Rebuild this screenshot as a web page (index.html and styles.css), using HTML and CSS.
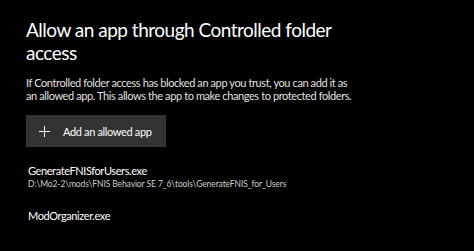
FILE: index.html
```html
<!DOCTYPE html>
<html lang="en">

<head>
    <meta charset="UTF-8">
    <title>Allow an app through Controlled folder access</title>
    <link rel="stylesheet" href="styles.css">
</head>

<body>
    <div class="page">
        <h1 class="title">Allow an app through Controlled folder access</h1>
        <p class="desc">If Controlled folder access has blocked an app you trust, you can add it as an allowed app. This allows the app to make changes to protected folders.</p>

        <button class="add-btn">
            <svg class="plus" width="11" height="11" viewBox="0 0 11 11">
                <path d="M5.5 0 V11 M0 5.5 H11" stroke="#fff" stroke-width="1" fill="none" />
            </svg>
            <span>Add an allowed app</span>
        </button>

        <div class="app-list">
            <div class="app">
                <div class="app-name">GenerateFNISforUsers.exe</div>
                <div class="app-path">D:\Mo2-2\mods\FNIS Behavior SE 7_6\tools\GenerateFNIS_for_Users</div>
            </div>
            <div class="app">
                <div class="app-name">ModOrganizer.exe</div>
            </div>
        </div>
    </div>
</body>

</html>
```

FILE: styles.css
```css
* {
    box-sizing: border-box;
}

body {
    margin: 0;
    background-color: #000;
    color: #fff;
    font-family: Lato, "Open Sans", sans-serif;
}

.page {
    padding: 18px 26px 0 26px;
}

.title {
    margin: 0;
    width: 320px;
    font-size: 19px;
    font-weight: 400;
    line-height: 23px;
    letter-spacing: -0.5px;
}

.desc {
    margin: 12px 0 0 0;
    width: 330px;
    font-size: 11px;
    line-height: 13px;
    letter-spacing: -0.4px;
    color: #e0e0e0;
}

.add-btn {
    display: flex;
    align-items: center;
    gap: 13px;
    width: 140px;
    height: 32px;
    margin-top: 13px;
    padding: 0 0 0 13px;
    border: none;
    background-color: #333;
    color: #fff;
    font-family: inherit;
    font-size: 11px;
    letter-spacing: -0.35px;
    white-space: nowrap;
}

.app-list {
    display: flex;
    flex-direction: column;
    gap: 19px;
    margin-top: 17px;
    padding-left: 2px;
}

.app-name {
    font-size: 11px;
    line-height: 14px;
    letter-spacing: -0.4px;
}

.app-path {
    font-size: 8.5px;
    line-height: 12px;
    letter-spacing: -0.1px;
    color: #cfcfcf;
}
```
